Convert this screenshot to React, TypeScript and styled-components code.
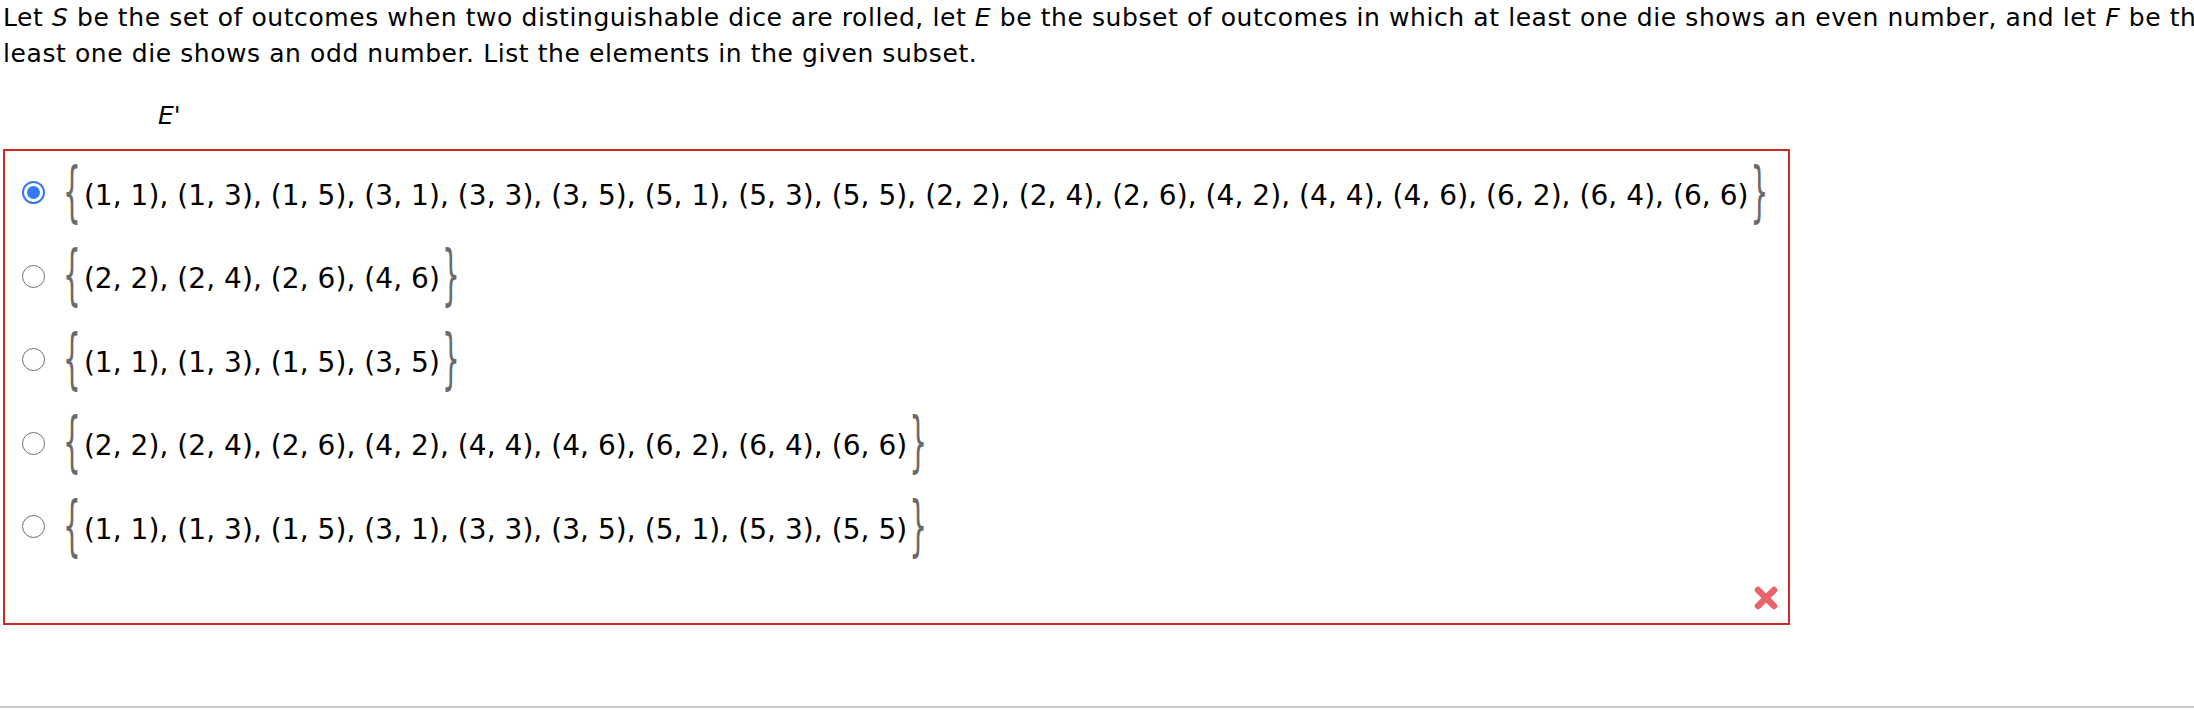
import React from 'react';
import styled, { createGlobalStyle } from 'styled-components';

const GlobalStyle = createGlobalStyle`
  html, body {
    margin: 0;
    padding: 0;
    overflow: hidden;
    background: #fff;
  }
`;

const Page = styled.div`
  padding-left: 3px;
  font-family: "DejaVu Sans", Verdana, sans-serif;
  color: #000;
`;

const Question = styled.p`
  margin: 0;
  font-size: 25px;
  line-height: 36px;
  letter-spacing: 0.58px;
  white-space: nowrap;
`;

const Prompt = styled.div`
  margin-top: 26px;
  padding-left: 155px;
  font-size: 25px;
  line-height: 36px;
  font-style: italic;
`;

const AnswerBox = styled.div`
  box-sizing: border-box;
  width: 1787px;
  margin-top: 15px;
  border: 2px solid #cc2a22;
`;

const OptionList = styled.div`
  display: flex;
  flex-direction: column;
`;

const OptionRow = styled.label`
  display: flex;
  align-items: center;
  height: 83.5px;
  padding-left: 17px;
  gap: 18px;
`;

const Radio = styled.span<{ $checked?: boolean }>`
  box-sizing: border-box;
  flex: none;
  width: 23px;
  height: 23px;
  border-radius: 50%;
  border: ${p => (p.$checked ? '2.5px solid #3478f6' : '1.8px solid #6f6f6f')};
  display: flex;
  align-items: center;
  justify-content: center;

  &::after {
    content: '';
    display: ${p => (p.$checked ? 'block' : 'none')};
    width: 13px;
    height: 13px;
    border-radius: 50%;
    background: #3478f6;
  }
`;

const MathSet = styled.span`
  display: flex;
  align-items: center;
  font-size: 28px;
  letter-spacing: 0.05px;
  white-space: nowrap;
`;

const Brace = styled.span<{ $side: 'left' | 'right' }>`
  display: inline-block;
  font-family: "DejaVu Sans", sans-serif;
  font-size: 28px;
  line-height: 1;
  color: #6a6a6a;
  transform: scaleY(2.35);
  margin: ${p => (p.$side === 'left' ? '0 3px 0 0' : '0 0 0 2px')};
`;

const Elements = styled.span`
  padding-top: 5px;
`;

const Footer = styled.div`
  display: flex;
  justify-content: flex-end;
  padding: 16px 9px 12px 0;
`;

const Rule = styled.div`
  margin-top: 81px;
  height: 2px;
  background: #cccccc;
`;

const pairs = (list: number[][]) => list.map(([a, b]) => `(${a}, ${b})`).join(', ');

const options = [
  {
    checked: true,
    items: [
      [1, 1], [1, 3], [1, 5], [3, 1], [3, 3], [3, 5], [5, 1], [5, 3], [5, 5],
      [2, 2], [2, 4], [2, 6], [4, 2], [4, 4], [4, 6], [6, 2], [6, 4], [6, 6],
    ],
  },
  { checked: false, items: [[2, 2], [2, 4], [2, 6], [4, 6]] },
  { checked: false, items: [[1, 1], [1, 3], [1, 5], [3, 5]] },
  {
    checked: false,
    items: [[2, 2], [2, 4], [2, 6], [4, 2], [4, 4], [4, 6], [6, 2], [6, 4], [6, 6]],
  },
  {
    checked: false,
    items: [[1, 1], [1, 3], [1, 5], [3, 1], [3, 3], [3, 5], [5, 1], [5, 3], [5, 5]],
  },
];

const WrongMark = () => (
  <svg width="26" height="26" viewBox="0 0 26 26">
    <g stroke="#e8565d" strokeWidth="6.5" strokeLinecap="round" opacity="0.92">
      <line x1="5" y1="5" x2="21" y2="21" />
      <line x1="21" y1="5" x2="5" y2="21" />
    </g>
  </svg>
);

const App = () => {
  return (
    <>
      <GlobalStyle />
      <Page>
        <Question>
          Let <i>S</i> be the set of outcomes when two distinguishable dice are rolled, let{' '}
          <i>E</i> be the subset of outcomes in which at least one die shows an even number,
          and let <i>F</i> be the subset of outcomes in which at
          <br />
          least one die shows an odd number. List the elements in the given subset.
        </Question>

        <Prompt>E'</Prompt>

        <AnswerBox>
          <OptionList>
            {options.map((opt, i) => (
              <OptionRow key={i}>
                <Radio $checked={opt.checked} />
                <MathSet>
                  <Brace $side="left">{'{'}</Brace>
                  <Elements>{pairs(opt.items)}</Elements>
                  <Brace $side="right">{'}'}</Brace>
                </MathSet>
              </OptionRow>
            ))}
          </OptionList>
          <Footer>
            <WrongMark />
          </Footer>
        </AnswerBox>
      </Page>
      <Rule />
    </>
  );
};

export default App;
